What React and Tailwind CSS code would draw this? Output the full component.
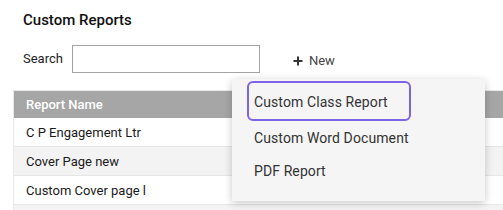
import React from "react";

const rows = ["C P Engagement Ltr", "Cover Page new", "Custom Cover page l", ""];

export default function App() {
  return (
    <div className="relative w-[503px] h-[210px] overflow-hidden bg-white font-['Roboto',sans-serif] text-[#212121]">
      <div className="pl-[23px] pt-[11px] text-[15px] leading-[18px] font-medium text-[#111]">
        Custom Reports
      </div>
      <div className="flex items-center pl-[23px] mt-[16px]">
        <span className="text-[13px] leading-[16px] text-[#222]">Search</span>
        <div className="ml-[9px] w-[188px] h-[28px] border border-[#a3a3a3] bg-white" />
        <div className="ml-[33px] flex items-center gap-[6px] text-[13px] leading-[16px] text-[#444] pt-[3px]">
          <svg width="10" height="10" viewBox="0 0 10 10" className="text-[#333]">
            <path d="M5 0.5v9M0.5 5h9" stroke="currentColor" strokeWidth="2" />
          </svg>
          <span>New</span>
        </div>
      </div>
      <div className="ml-[13px] mt-[17px] border-t border-[#e8e8e8] border-l">
        <div className="h-[27px] flex items-center bg-[#a6a6a6] pl-[12px] text-[13px] font-medium text-white">
          Report Name
        </div>
        {rows.map((r, i) => (
          <div
            key={i}
            className={
              "h-[29px] flex items-center pl-[12px] pt-[1px] text-[13px] text-[#1a1a1a] border-b border-[#e6e6e6] " +
              (i % 2 === 1 ? "bg-[#f3f3f3]" : "bg-white")
            }
          >
            {r}
          </div>
        ))}
      </div>
      <div className="absolute left-[232px] top-[79px] w-[253px] h-[122px] bg-[#f5f5f5] shadow-[0_2px_8px_rgba(0,0,0,0.22)] text-[14px] text-[#333] tracking-[0.1px]">
        <div className="ml-[15px] mt-[2px] w-[164px] h-[40px] flex items-center pl-[5px] pt-[3px] border-2 border-[#7d64e6] rounded-[6px]">
          Custom Class Report
        </div>
        <div className="h-[33px] mt-[-1px] pt-[3px] flex items-center pl-[22px]">Custom Word Document</div>
        <div className="h-[33px] pt-[3px] flex items-center pl-[22px]">PDF Report</div>
      </div>
    </div>
  );
}
